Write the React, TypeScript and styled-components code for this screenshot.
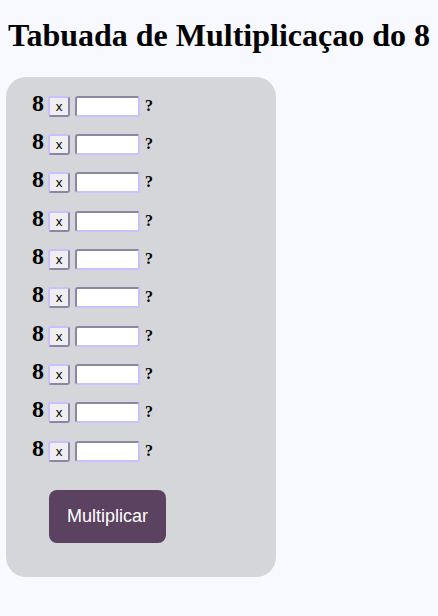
import React from 'react';
import styled, { createGlobalStyle } from 'styled-components';

const GlobalStyle = createGlobalStyle`
    html, body {
        margin: 0;
        padding: 0;
        background-color: #f8f9fe;
        font-family: "Liberation Serif", "Times New Roman", serif;
    }
`;

// Page title
const Title = styled.h1`
    margin: 17px 0 0 8px;
    font-size: 32px;
    font-weight: bold;
    line-height: normal;
    color: #000;
    white-space: nowrap;
`;

// Grey card that holds the table
const Panel = styled.div`
    width: 270px;
    box-sizing: border-box;
    margin: 23px 0 0 6px;
    padding: 12.6px 0 34px 26px;
    background-color: #d5d6da;
    border-radius: 20px;
`;

const Row = styled.div`
    display: flex;
    align-items: baseline;
    height: 38.33px;
`;

const Digit = styled.span`
    font-size: 24px;
    font-weight: bold;
    line-height: normal;
    margin-right: 4px;
`;

const TimesButton = styled.button`
    box-sizing: border-box;
    width: 22px;
    height: 21px;
    padding: 1px 0;
    font-family: "Liberation Sans", Arial, sans-serif;
    font-size: 13.33px;
    color: #000;
    background-color: #efeff1;
    border: 2px solid;
    border-color: #cbc0fd #8c85a6 #8c85a6 #cbc0fd;
    border-radius: 3px;
    margin-right: 5px;
`;

const Answer = styled.input`
    box-sizing: border-box;
    width: 65px;
    height: 21px;
    padding: 1px 2px;
    font-family: "Liberation Sans", Arial, sans-serif;
    font-size: 13.33px;
    background-color: #fff;
    border: 2px solid;
    border-color: #8c85a6 #cbc0fd #cbc0fd #8c85a6;
    border-radius: 3px;
    margin-right: 5px;
`;

const Question = styled.span`
    font-size: 16px;
    font-weight: bold;
`;

const MultiplyButton = styled.button`
    margin: 17px 0 0 17px;
    width: 117px;
    height: 53px;
    padding: 0;
    border: none;
    border-radius: 8px;
    background-color: #5b4260;
    color: #fff;
    font-family: "Liberation Sans", Arial, sans-serif;
    font-size: 18px;
`;

const rows = Array.from({ length: 10 }, (_, i) => i + 1);

const App: React.FC = () => {
    return (
        <>
            <GlobalStyle />
            <Title>Tabuada de Multiplicaçao do 8</Title>
            <Panel>
                {rows.map((n) => (
                    <Row key={n}>
                        <Digit>8</Digit>
                        <TimesButton>x</TimesButton>
                        <Answer type="text" />
                        <Question>?</Question>
                    </Row>
                ))}
                <MultiplyButton>Multiplicar</MultiplyButton>
            </Panel>
        </>
    );
};

export default App;
